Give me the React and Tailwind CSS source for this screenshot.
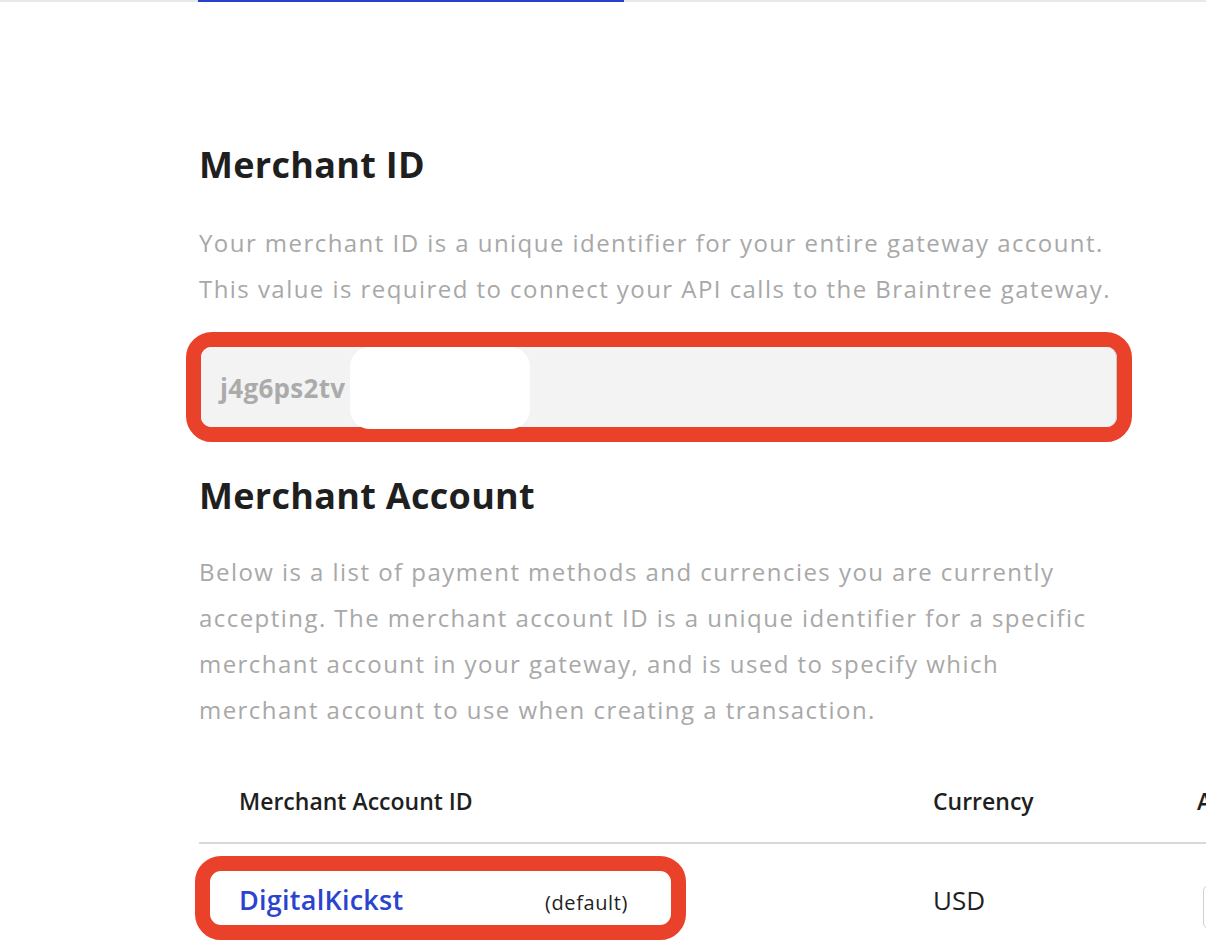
import React from "react";

export default function App() {
  return (
    <div className="w-[1206px] h-[950px] bg-white overflow-hidden text-[#1f1f1f] font-['Open_Sans',_'Noto_Sans',_sans-serif]">
      <div className="h-[2px] w-full bg-[#e8e8e8] flex">
        <div className="ml-[198px] w-[426px] h-full bg-[#2741cc]" />
      </div>

      <div className="pl-[199px] pt-[141px]">
        <h2 className="text-[36px] leading-[44px] font-bold tracking-[0.3px] whitespace-nowrap">Merchant ID</h2>
        <p className="mt-[33px] text-[24px] leading-[46px] tracking-[1.45px] text-[#a8a8a8] whitespace-nowrap">
          Your merchant ID is a unique identifier for your entire gateway account.
          <br />
          This value is required to connect your API calls to the Braintree gateway.
        </p>

        <div className="mt-[20px] ml-[-13px] w-[946px] border-[15px] border-[#e9412a] rounded-[26px]">
          <div className="relative h-[80px] bg-[#f3f3f3] rounded-[10px] border-r border-[#c8c8c8] flex items-center pl-[19px] pt-[2px]">
            <span className="text-[26px] font-bold text-[#ababab] tracking-[0.3px]">j4g6ps2tv</span>
            <div className="absolute left-[149px] top-0 w-[180px] h-[82px] bg-white rounded-[20px]" />
          </div>
        </div>

        <h2 className="mt-[32px] text-[36px] leading-[44px] font-bold tracking-[0.3px] whitespace-nowrap">Merchant Account</h2>
        <p className="mt-[31px] text-[24px] leading-[46px] tracking-[1.45px] text-[#a8a8a8] whitespace-nowrap">
          Below is a list of payment methods and currencies you are currently
          <br />
          accepting. The merchant account ID is a unique identifier for a specific
          <br />
          merchant account in your gateway, and is used to specify which
          <br />
          merchant account to use when creating a transaction.
        </p>

        <div className="mt-[52px] w-[1100px]">
          <div className="flex border-b-2 border-[#d9d9d9] pb-[25px] text-[23px] leading-[32px] font-semibold whitespace-nowrap">
            <div className="w-[734px] pl-[40px]">Merchant Account ID</div>
            <div className="w-[264px]">Currency</div>
            <div>Active</div>
          </div>
          <div className="relative flex items-baseline h-[110px] pt-[38px] whitespace-nowrap">
            <div className="w-[734px] pl-[40px] flex items-baseline">
              <span className="w-[306px] text-[27px] leading-[36px] font-semibold tracking-[0.25px] text-[#2a44cf]">DigitalKickst</span>
              <span className="text-[20px] leading-[28px] tracking-[0.6px] text-[#222]">(default)</span>
            </div>
            <div className="w-[264px] text-[26px] leading-[36px] text-[#1f1f1f]">USD</div>
            <div className="self-start mt-[3px] ml-[6px] w-[30px] h-[44px] border border-[#d0d0d0] rounded-[6px] bg-white" />
            <div className="absolute left-[-4px] top-[12px] w-[491px] h-[84px] border-[15px] border-[#e9412a] rounded-[26px]" />
          </div>
        </div>
      </div>
    </div>
  );
}
